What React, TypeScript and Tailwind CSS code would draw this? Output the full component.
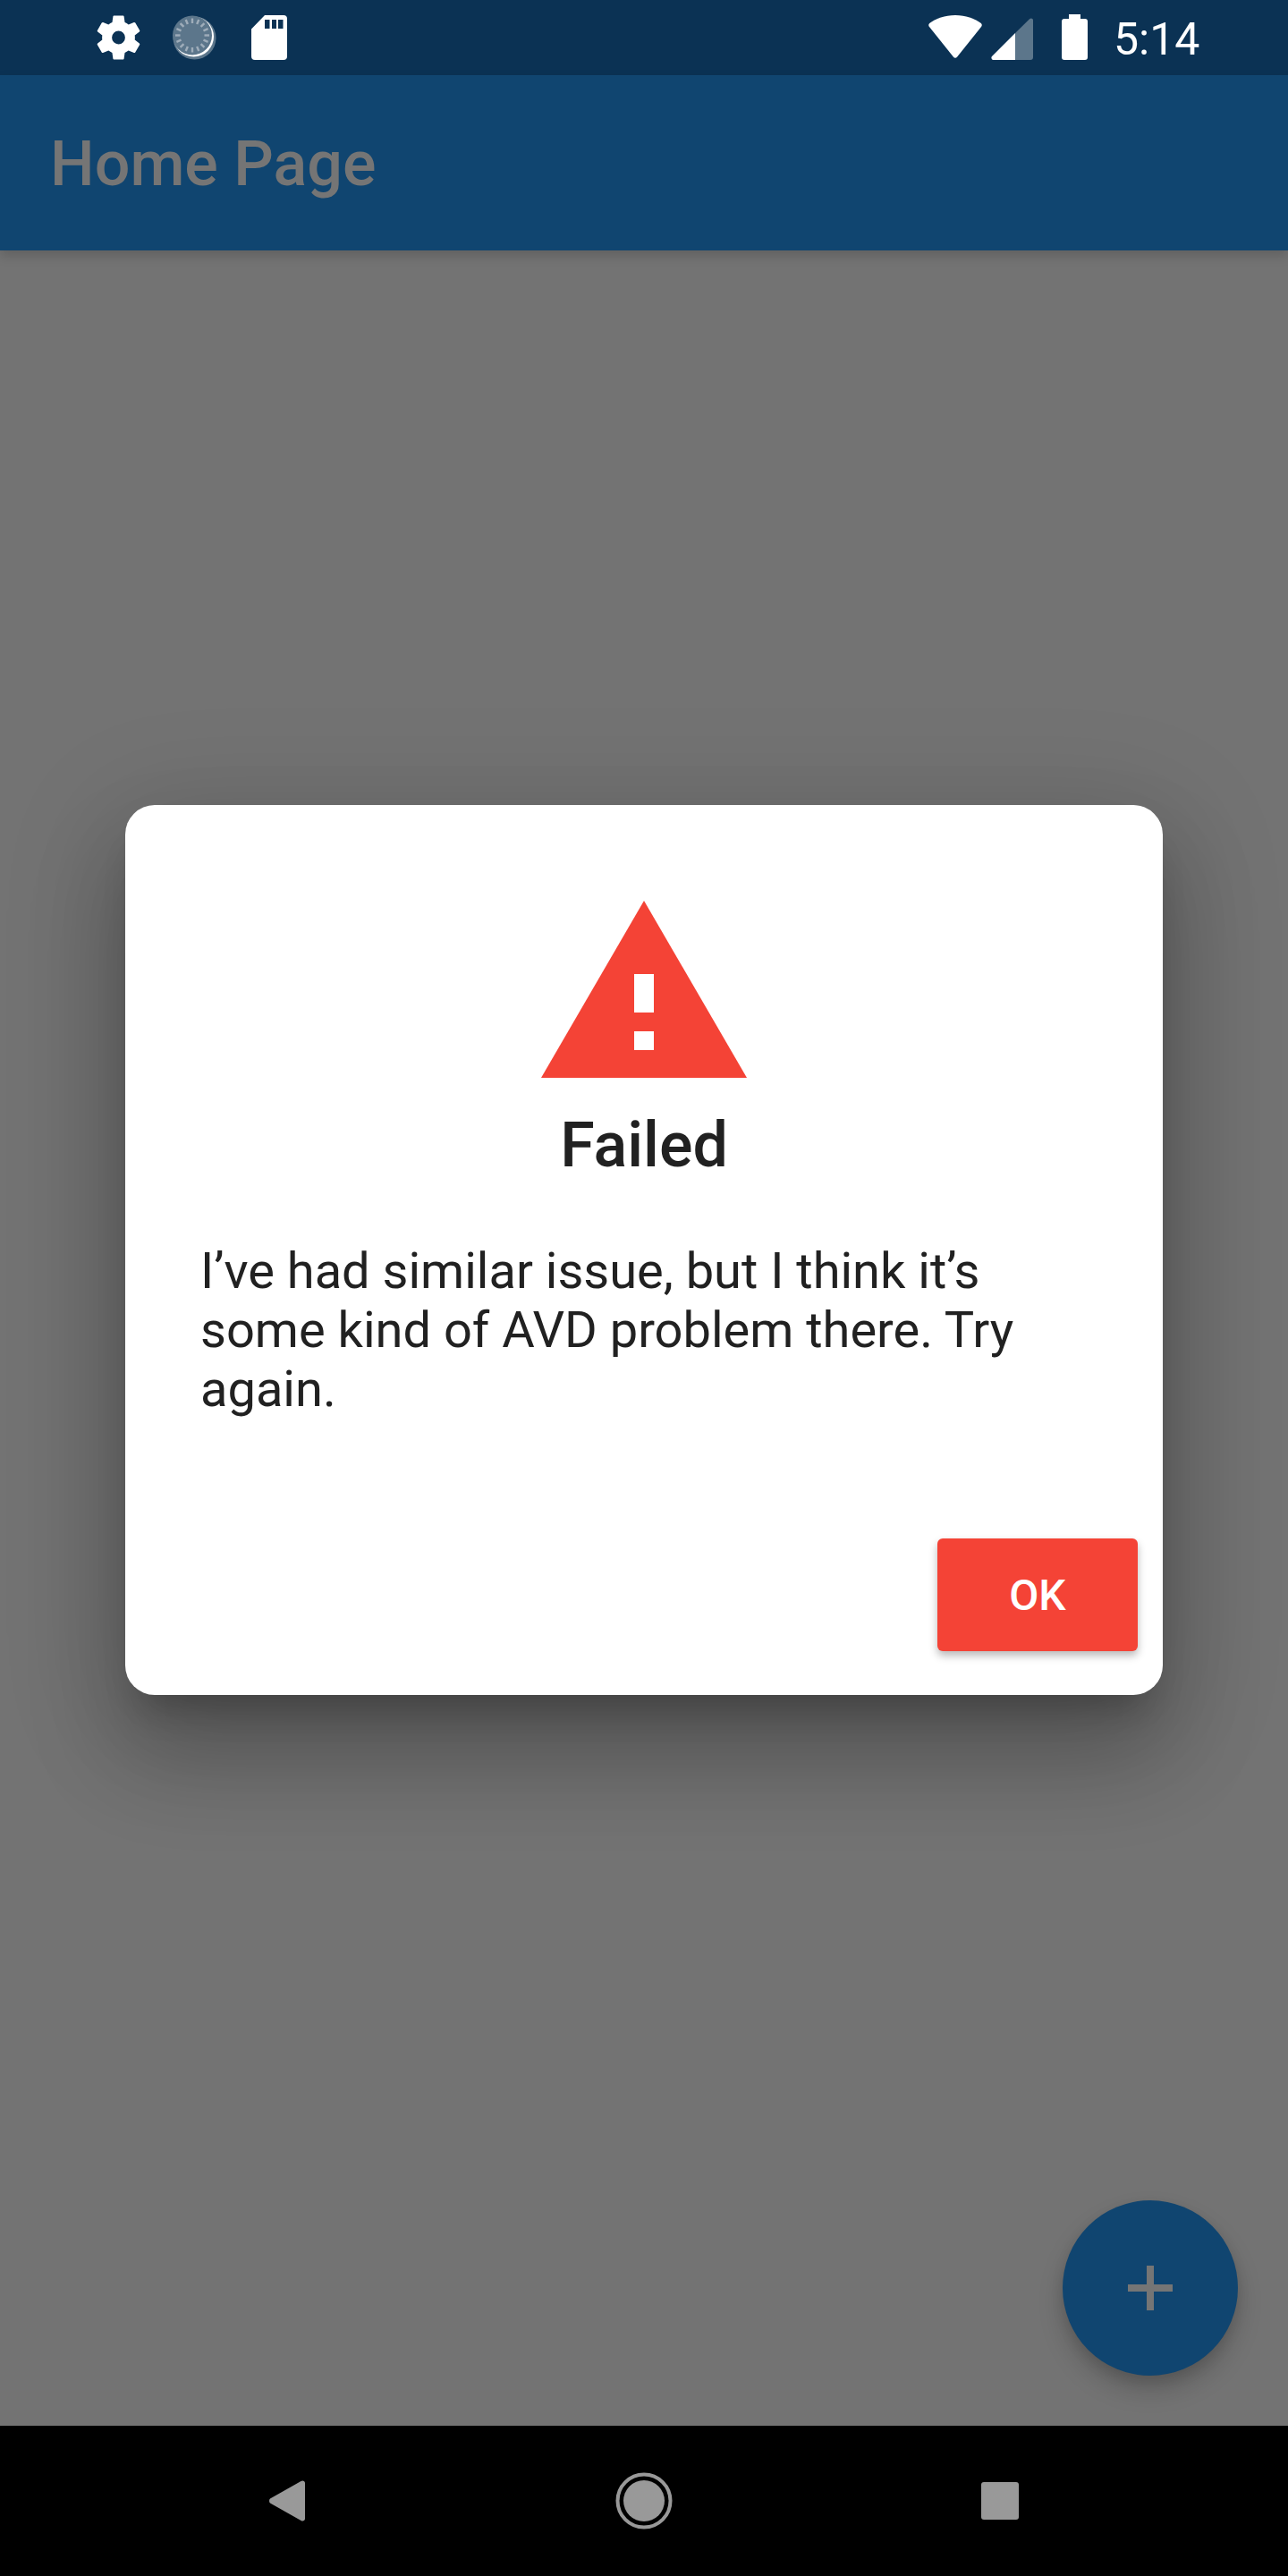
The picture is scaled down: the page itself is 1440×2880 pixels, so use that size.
// Home page with the failure dialog open, on an Android frame

const TICKS = Array.from({ length: 16 }, (_, i) => (i * Math.PI) / 8);

const GEAR =
  'M19.14 12.94c.04-.3.06-.61.06-.94 0-.32-.02-.64-.07-.94l2.03-1.58c.18-.14.23-.41.12-.61l-1.92-3.32c-.12-.22-.37-.29-.59-.22l-2.39.96c-.5-.38-1.03-.7-1.62-.94l-.36-2.54c-.04-.24-.24-.41-.48-.41h-3.84c-.24 0-.43.17-.47.41l-.36 2.54c-.59.24-1.13.57-1.62.94l-2.39-.96c-.22-.08-.47 0-.59.22L2.74 8.87c-.12.21-.08.47.12.61l2.03 1.58c-.05.3-.09.63-.09.94s.02.64.07.94l-2.03 1.58c-.18.14-.23.41-.12.61l1.92 3.32c.12.22.37.29.59.22l2.39-.96c.5.38 1.03.7 1.62.94l.36 2.54c.05.24.24.41.48.41h3.84c.24 0 .44-.17.47-.41l.36-2.54c.59-.24 1.13-.56 1.62-.94l2.39.96c.22.08.47 0 .59-.22l1.92-3.32c.12-.22.07-.47-.12-.61l-2.01-1.58zM12 14.9a2.9 2.9 0 1 1 0-5.8 2.9 2.9 0 0 1 0 5.8z';

const StatusBar = () => (
  <div className="flex h-[84px] shrink-0 items-start bg-[#0b3254] text-white">
    <svg viewBox="2.6 2.2 18.8 19.6" className="mt-[17px] ml-[108px] h-[50px] w-[49px]">
      <path d={GEAR} fill="#fff" fillRule="evenodd" />
    </svg>
    <svg viewBox="0 0 50 50" className="mt-[17px] ml-[35px] h-[50px] w-[50px]">
      <circle cx="25.5" cy="25.5" r="24" fill="#5c768b" />
      <circle cx="24.5" cy="24" r="22.5" fill="#fff" />
      <circle cx="23" cy="22.5" r="22" fill="#5c768b" />
      {TICKS.map((a) => (
        <line
          key={a}
          x1={23 + Math.cos(a) * 13.5}
          y1={22.5 + Math.sin(a) * 13.5}
          x2={23 + Math.cos(a) * 19}
          y2={22.5 + Math.sin(a) * 19}
          stroke="#9fadba"
          strokeWidth="2.4"
        />
      ))}
    </svg>
    <svg viewBox="0 0 40 50" className="mt-[17px] ml-[39px] h-[50px] w-[40px]">
      <path
        fillRule="evenodd"
        fill="#fff"
        d="M15 0H36a4 4 0 0 1 4 4V46a4 4 0 0 1-4 4H4a4 4 0 0 1-4-4V15.5zM15 5V15H20.5V5zM23 5V15H28V5zM30 5V15H35.5V5z"
      />
    </svg>

    <svg viewBox="0 0 60 48" className="mt-[17px] ml-auto h-[48px] w-[60px]">
      <path
        fill="#fff"
        d="M30 0C18 0 9 3.5 1.2 9 .2 9.8-.2 11.5.8 12.8L28 46.8c1 1.2 3 1.2 4 0L59.2 12.8c1-1.3.6-3-.4-3.8C51 3.5 42 0 30 0z"
      />
    </svg>
    <svg viewBox="0 0 47 47" className="mt-[20px] ml-[10px] h-[47px] w-[47px]">
      <path fill="#fff" d="M27 17L1 43c-1.3 1.3-.5 4 1.5 4H27z" />
      <path fill="#5c768b" d="M27 17L43 1.2C44.5-.3 47 .5 47 2.5V44a3 3 0 0 1-3 3H27z" />
    </svg>
    <svg viewBox="0 0 29 51" className="mt-[16px] ml-[32px] h-[51px] w-[29px]">
      <path
        fill="#fff"
        d="M8 0H21V5H26a3 3 0 0 1 3 3V48a3 3 0 0 1-3 3H3a3 3 0 0 1-3-3V8a3 3 0 0 1 3-3H8z"
      />
    </svg>
    <span className="mt-[15px] mr-[101px] ml-[29px] w-[94px] font-['Roboto',sans-serif] text-[50px] leading-[58px] whitespace-nowrap">
      5:14
    </span>
  </div>
);

const AppBar = () => (
  <div className="relative z-10 flex h-[196px] shrink-0 items-center bg-[#104570] pl-[56px] shadow-[0_6px_12px_rgba(0,0,0,0.16)]">
    <h1 className="mt-[2px] font-['Roboto',sans-serif] text-[70px] leading-none font-medium text-[#757575]">
      Home Page
    </h1>
  </div>
);

const FailedDialog = () => (
  <div className="mt-[620px] ml-[140px] flex w-[1160px] flex-col items-center rounded-[33px] bg-white pt-[107px] pb-[49px] font-['Roboto',sans-serif] text-[#212121] shadow-[0_66px_104px_8px_rgba(0,0,0,0.2),0_25px_126px_22px_rgba(0,0,0,0.12),0_30px_41px_-19px_rgba(0,0,0,0.24)]">
    <svg viewBox="0 0 230 198" className="h-[198px] w-[230px]">
      <path fill="#f44336" d="M115 0L230 198H0z" />
      <rect x="104" y="82" width="22" height="43" fill="#fff" />
      <rect x="104" y="146" width="22" height="21" fill="#fff" />
    </svg>
    <h2 className="mt-[34px] text-[70px] leading-[82px] font-medium">Failed</h2>
    <p className="mt-[67px] w-[992px] text-[56px] leading-[66px]">
      I’ve had similar issue, but I think it’s some kind of AVD problem there. Try again.
    </p>
    <div className="mt-[134px] flex w-full justify-end pr-[28px]">
      <button className="flex h-[126px] w-[224px] items-center justify-center rounded-[6px] bg-[#f44336] pt-[2px] text-[48px] font-medium text-white shadow-[0_5px_10px_rgba(0,0,0,0.28)]">
        OK
      </button>
    </div>
  </div>
);

const NavBar = () => (
  <div className="flex h-[168px] shrink-0 items-center bg-black">
    <svg viewBox="0 0 40 46" className="ml-[301px] h-[46px] w-[40px]">
      <path
        fill="#999"
        d="M1 20.5L35.5 1C37.5-.3 40 .8 40 3V43c0 2.2-2.5 3.3-4.5 2L1 25.5c-1.3-1.2-1.3-3.8 0-5z"
      />
    </svg>
    <svg viewBox="0 0 64 64" className="ml-[347px] h-[64px] w-[64px]">
      <circle cx="32" cy="32" r="29.5" fill="none" stroke="#999" strokeWidth="4" />
      <circle cx="32" cy="32" r="23" fill="#999" />
    </svg>
    <div className="ml-[345px] h-[42px] w-[42px] rounded-[3px] bg-[#999]" />
  </div>
);

export default function App() {
  return (
    <div className="flex h-[2880px] w-[1440px] flex-col overflow-hidden bg-[#737373]">
      <StatusBar />
      <AppBar />
      <main className="relative flex-1">
        <FailedDialog />
        <button className="absolute right-[56px] bottom-[56px] flex h-[196px] w-[196px] items-center justify-center rounded-full bg-[#104570] shadow-[0_16px_28px_rgba(0,0,0,0.18),0_6px_14px_rgba(0,0,0,0.1)]">
          <svg viewBox="0 0 50 50" className="h-[50px] w-[50px]">
            <path fill="#757575" d="M21 0h8v21h21v8H29v21h-8V29H0v-8h21z" />
          </svg>
        </button>
      </main>
      <NavBar />
    </div>
  );
}
